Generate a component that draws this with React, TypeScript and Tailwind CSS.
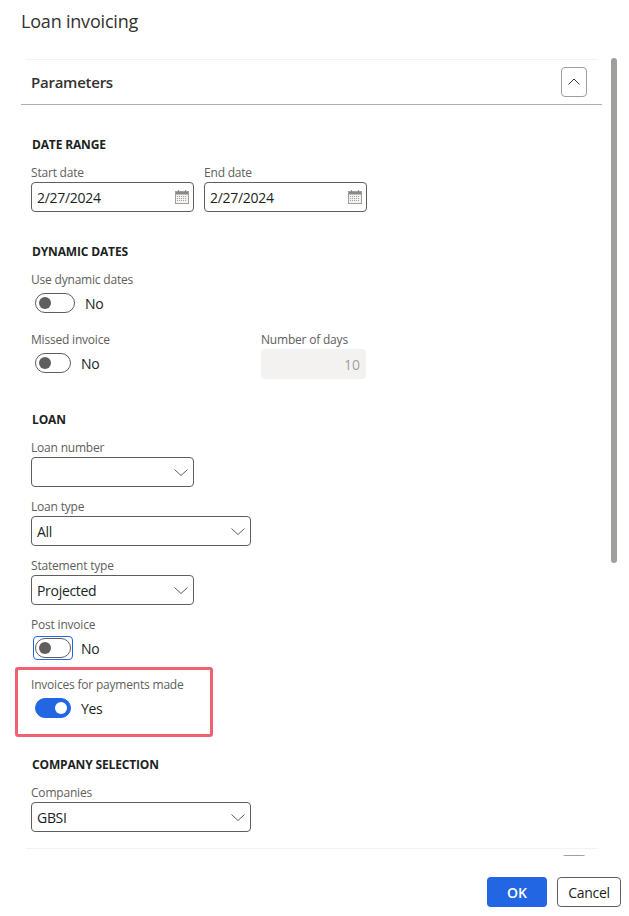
import React from "react";

const FieldLabel = ({ children }: { children: React.ReactNode }) => (
  <div className="h-4 text-[12px] leading-4 tracking-[-0.2px] text-[#605e5c]">{children}</div>
);

const Heading = ({ children }: { children: React.ReactNode }) => (
  <div className="h-4 pl-px text-[12px] leading-[17px] font-bold tracking-[-0.15px] text-[#201f1e]">{children}</div>
);

const CalendarIcon = () => (
  <svg width="14" height="14" viewBox="0 0 14 14" className="shrink-0">
    <rect x="0.5" y="1.5" width="13" height="12" fill="#f3f2f1" stroke="#a19f9d" />
    <rect x="1" y="2" width="12" height="2.5" fill="#8a8886" />
    <path d="M3.5 0v2M10.5 0v2" stroke="#8a8886" />
    <path d="M2 6.5h10M2 8.5h10M2 10.5h10" stroke="#a19f9d" strokeWidth="1" strokeDasharray="1 1" />
  </svg>
);

const Chevron = () => (
  <svg width="14" height="7" viewBox="0 0 14 7" className="shrink-0" fill="none">
    <path d="M0.5 0.5L7 6.5L13.5 0.5" stroke="#605e5c" strokeWidth="1" />
  </svg>
);

const DateField = ({ label }: { label: string }) => (
  <div className="w-[163px]">
    <FieldLabel>{label}</FieldLabel>
    <div className="mt-px flex h-[30px] items-center justify-between rounded-[4px] border border-[#605e5c] pl-[5px] pr-[4px] text-[14px] tracking-[-0.3px] text-[#201f1e]">
      <span>2/27/2024</span>
      <CalendarIcon />
    </div>
  </div>
);

const SelectField = ({ label, value, width }: { label: string; value: string; width: string }) => (
  <div className={width}>
    <FieldLabel>{label}</FieldLabel>
    <div className="mt-px flex h-[30px] items-center justify-between rounded-[4px] border border-[#605e5c] pl-[5px] pr-[5px] text-[14px] tracking-[-0.3px] text-[#201f1e]">
      <span>{value}</span>
      <Chevron />
    </div>
  </div>
);

const Toggle = ({ on, wide, text }: { on?: boolean; wide?: boolean; text: string }) => (
  <div className="mt-[5px] flex h-5 items-center pl-1">
    <div
      className={`flex h-5 items-center rounded-full border px-[3px] ${wide ? "w-10" : "w-9"} ${
        on ? "justify-end border-[#2266e3] bg-[#2266e3]" : "border-[#605e5c] bg-white"
      }`}
    >
      <span className={`h-3 w-3 rounded-full ${on ? "bg-white" : "bg-[#605e5c]"}`} />
    </div>
    <span className="ml-[10px] text-[14px] tracking-[-0.3px] text-[#201f1e]">{text}</span>
  </div>
);

export default function App() {
  return (
    <div className="relative flex h-[916px] w-[629px] flex-col overflow-hidden bg-white font-['Open_Sans',sans-serif]">
      <div className="h-[59px] pl-[21px] pt-[9px] text-[18px] leading-6 tracking-[-0.2px] text-[#323130]">Loan invoicing</div>

      <div className="h-[797px] overflow-hidden pl-[21px]">
        <div className="w-[581px]">
          <div className="mx-[5px] border-t border-[#f3f2f1]" />
          <div className="flex h-[45px] items-center justify-between border-b border-[#b3b0ad] pl-[10px] pr-[15px]">
            <span className="text-[15px] font-semibold tracking-[-0.25px] text-[#323130]">Parameters</span>
            <button className="mt-[-1px] flex h-[30px] w-[26px] items-center justify-center rounded-[4px] border border-[#a19f9d]">
              <svg width="12" height="7" viewBox="0 0 12 7" fill="none">
                <path d="M0.5 6.5L6 1L11.5 6.5" stroke="#323130" strokeWidth="1" />
              </svg>
            </button>
          </div>

          <div className="pl-[10px]">
            <div className="pt-[31px]">
              <Heading>DATE RANGE</Heading>
            </div>
            <div className="mt-[13px] flex gap-[10px]">
              <DateField label="Start date" />
              <DateField label="End date" />
            </div>

            <div className="mt-[31px]">
              <Heading>DYNAMIC DATES</Heading>
            </div>
            <div className="mt-[13px]">
              <FieldLabel>Use dynamic dates</FieldLabel>
              <Toggle wide text="No" />
            </div>
            <div className="mt-[19px] flex">
              <div className="w-[230px]">
                <FieldLabel>Missed invoice</FieldLabel>
                <Toggle text="No" />
              </div>
              <div className="w-[105px]">
                <FieldLabel>Number of days</FieldLabel>
                <div className="mt-px flex h-[30px] items-center justify-end rounded-[4px] bg-[#f3f2f1] pr-[6px] text-[14px] text-[#a19f9d]">10</div>
              </div>
            </div>

            <div className="mt-[32px]">
              <Heading>LOAN</Heading>
            </div>
            <div className="mt-[13px] flex flex-col gap-3">
              <SelectField label="Loan number" value="" width="w-[163px]" />
              <SelectField label="Loan type" value="All" width="w-[220px]" />
              <SelectField label="Statement type" value="Projected" width="w-[163px]" />
            </div>
            <div className="relative mt-3">
              <FieldLabel>Post invoice</FieldLabel>
              <Toggle text="No" />
              <div className="absolute left-[2px] top-[19px] h-6 w-10 rounded-[4px] border border-[#2266e3]" />
            </div>
            <div className="relative mt-[19px]">
              <FieldLabel>Invoices for payments made</FieldLabel>
              <Toggle on text="Yes" />
              <div className="absolute left-[-16px] top-[-10px] h-[70px] w-[198px] rounded-[3px] border-[3px] border-[#ee3a4f] opacity-80" />
            </div>

            <div className="mt-[38px]">
              <Heading>COMPANY SELECTION</Heading>
            </div>
            <div className="mt-[13px]">
              <SelectField label="Companies" value="GBSI" width="w-[220px]" />
            </div>
          </div>

          <div className="mx-[5px] mt-[16px] border-t border-[#f3f2f1]" />
          <div className="mr-[15px] mt-[6px] flex justify-end">
            <div className="h-[30px] w-[26px] rounded-[4px] border border-[#a19f9d]" />
          </div>
        </div>
      </div>

      <div className="absolute right-[12px] top-[58px] h-[505px] w-[6px] rounded-full bg-[#a19f9d]" />

      <div className="absolute bottom-0 left-0 right-0 flex h-[39px] items-start justify-end gap-[10px] bg-white pr-2">
        <button className="h-[30px] w-[60px] rounded-[4px] bg-[#2266e3] text-[14px] font-semibold text-white">OK</button>
        <button className="h-[30px] w-[64px] rounded-[4px] border border-[#605e5c] bg-white text-[14px] tracking-[-0.3px] text-[#201f1e]">Cancel</button>
      </div>
    </div>
  );
}
